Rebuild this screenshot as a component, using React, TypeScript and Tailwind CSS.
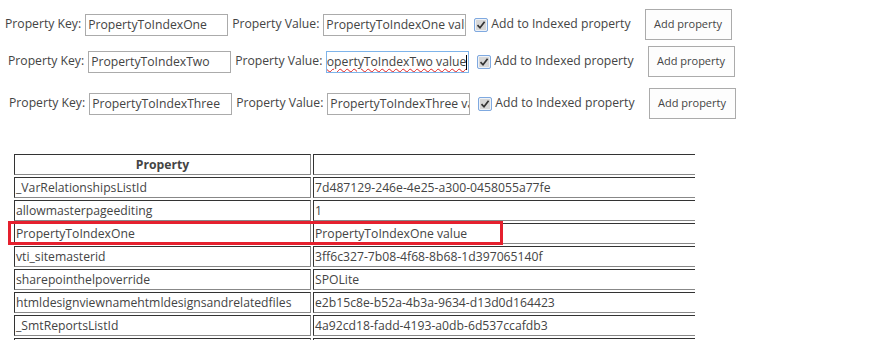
import React from "react";

const rows: [string, string][] = [
  ["_VarRelationshipsListId", "7d487129-246e-4e25-a300-0458055a77fe"],
  ["allowmasterpageediting", "1"],
  ["PropertyToIndexOne", "PropertyToIndexOne value"],
  ["vti_sitemasterid", "3ff6c327-7b08-4f68-8b68-1d397065140f"],
  ["sharepointhelpoverride", "SPOLite"],
  ["htmldesignviewnamehtmldesignsandrelatedfiles", "e2b15c8e-b52a-4b3a-9634-d13d0d164423"],
  ["_SmtReportsListId", "4a92cd18-fadd-4193-a0db-6d537ccafdb3"],
  ["vti_defaultlanguage", "en-us"],
];

const cell =
  "border-t border-l border-t-[#333] border-l-[#333] border-b border-r border-b-[#888] border-r-[#888] px-px leading-[19px] whitespace-nowrap";

function Check() {
  return (
    <span className="inline-flex h-[14px] w-[14px] items-center justify-center rounded-[2px] border border-[#7fa9e0] bg-[#d7d7d7] shadow-[inset_0_0_0_1px_#eef2f7]">
      <svg viewBox="0 0 10 10" className="h-[10px] w-[10px]">
        <path d="M1.5 5.2 L4 7.8 L8.6 1.8" fill="none" stroke="#333" strokeWidth="1.7" />
      </svg>
    </span>
  );
}

function FormRow({
  pad,
  keyText,
  value,
  focused,
  className,
}: {
  pad: string;
  keyText: string;
  value: string;
  focused?: boolean;
  className: string;
}) {
  return (
    <div className={`flex items-center ${pad} ${className}`}>
      <span className="text-[12.2px]">Property Key:</span>
      <div className="ml-[4px] h-[22px] w-[143px] shrink-0 overflow-hidden border border-[#ababab] px-[2px] leading-[20px] whitespace-nowrap">
        {keyText}
      </div>
      <span className="ml-[4px]">Property Value:</span>
      {focused ? (
        <div className="relative ml-[4px] h-[22px] w-[143px] shrink-0 overflow-hidden border border-[#7eb4ea] leading-[20px] whitespace-nowrap">
          <span className="absolute right-[2px] top-0 underline decoration-wavy decoration-[#e02020] decoration-1 underline-offset-2">
            {value}
          </span>
          <span className="absolute right-[1px] top-[3px] h-[15px] w-px bg-black" />
        </div>
      ) : (
        <div className="ml-[4px] h-[22px] w-[143px] shrink-0 overflow-hidden border border-[#ababab] px-[2px] leading-[20px] whitespace-nowrap">
          {value}
        </div>
      )}
      <span className="ml-[8px] flex">
        <Check />
      </span>
      <span className="ml-[3px]">Add to Indexed property</span>
      <button className="ml-[14px] h-[31px] w-[87px] shrink-0 border border-[#ababab] bg-[#fdfdfd] text-[11px] text-[#444]">
        Add property
      </button>
    </div>
  );
}

export default function App() {
  return (
    <div
      className="relative h-[349px] w-[872px] overflow-hidden bg-white text-[12.2px] text-[#444]"
      style={{ fontFamily: '"Open Sans", "Liberation Sans", sans-serif' }}
    >
      <FormRow pad="pl-[5px]" keyText="PropertyToIndexOne" value="PropertyToIndexOne value" className="mt-[9px]" />
      <FormRow pad="pl-[8px]" keyText="PropertyToIndexTwo" value="PropertyToIndexTwo value" focused className="mt-[6px]" />
      <FormRow pad="pl-[9px]" keyText="PropertyToIndexThree" value="PropertyToIndexThree value" className="mt-[11px]" />

      <div className="ml-[12px] mt-[33px] h-[188px] w-[683px] overflow-hidden">
        <table className="w-[800px] border-separate border-spacing-[2px]">
          <thead>
            <tr>
              <th className={`w-[297px] text-center font-bold ${cell}`}>Property</th>
              <th className={cell} />
            </tr>
          </thead>
          <tbody>
            {rows.map(([k, v]) => (
              <tr key={k}>
                <td className={cell}>{k}</td>
                <td className={cell}>{v}</td>
              </tr>
            ))}
          </tbody>
        </table>
      </div>

      {/* highlight around the new property */}
      <div className="absolute left-[8px] top-[221px] h-[24px] w-[495px] border-[3px] border-[#e5202e]" />
    </div>
  );
}
